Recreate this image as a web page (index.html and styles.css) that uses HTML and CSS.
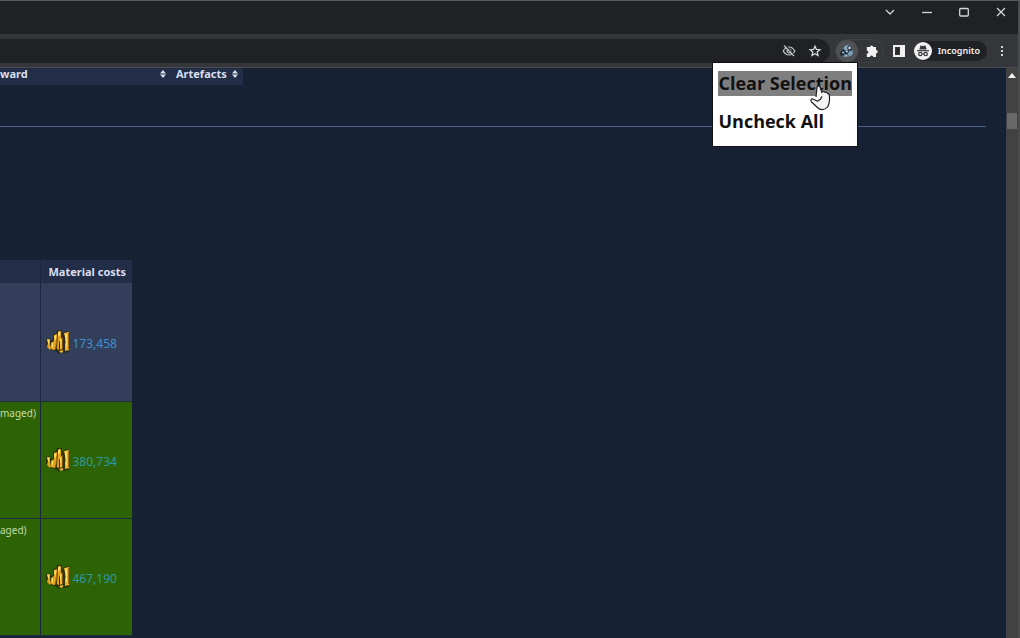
FILE: index.html
```html
<!DOCTYPE html>
<html lang="en">
<head>
    <meta charset="UTF-8">
    <meta name="viewport" content="width=device-width, initial-scale=1.0">
    <title>Material costs</title>
    <link rel="stylesheet" href="styles.css">
</head>
<body>
    <div class="browser">
        <header class="titlebar">
            <button class="window-button" aria-label="Search tabs">
                <svg width="12" height="12" viewBox="0 0 12 12"><path d="M2 4l4 4 4-4"/></svg>
            </button>
            <button class="window-button" aria-label="Minimize">
                <svg width="12" height="12" viewBox="0 0 12 12"><path d="M1 6.5h10"/></svg>
            </button>
            <button class="window-button" aria-label="Maximize">
                <svg width="12" height="12" viewBox="0 0 12 12"><rect x="1.7" y="2.5" width="8.6" height="7.5" rx="1"/></svg>
            </button>
            <button class="window-button" aria-label="Close">
                <svg width="12" height="12" viewBox="0 0 12 12"><path d="M2 2l8 8M10 2l-8 8"/></svg>
            </button>
        </header>

        <div class="toolbar">
            <div class="address">
                <input class="address-input" type="text" aria-label="Address">
                <button class="icon-button" aria-label="Third-party cookies blocked">
                    <svg width="14" height="14" viewBox="0 0 14 14" fill="none" stroke="#c4c6c9" stroke-width="1.2">
                        <path d="M1.2 7C3 3.8 5 3 7 3s4 .8 5.8 4C11 10.2 9 11 7 11S3 10.2 1.2 7z"/>
                        <circle cx="7" cy="7" r="2"/>
                        <path d="M3.5 1.5l9.5 10" stroke="#202124"/>
                        <path d="M2 1.5l10 10.5"/>
                    </svg>
                </button>
                <button class="icon-button" aria-label="Bookmark this tab">
                    <svg width="14" height="14" viewBox="0 0 14 14" fill="none" stroke="#d5d6d8" stroke-width="1.3">
                        <path d="M7 2.2l1.4 3.2 3.5.3-2.7 2.3.8 3.5L7 9.7l-3 1.8.8-3.5-2.7-2.3 3.5-.3z"/>
                    </svg>
                </button>
            </div>
            <div class="extensions">
                <button class="extension-button" aria-label="Selection helper">
                    <svg width="16" height="16" viewBox="0 0 16 16">
                        <path d="M3 9l2-5 4-2 3 2 2 4-1 4-4 2H4z" fill="#5f7f95"/>
                        <path d="M5 4l3-2 2 2-2 3-3-1z" fill="#8eabbd"/>
                        <path d="M9 3l3 1 1 3-3 1-2-3z" fill="#1d2b38"/>
                        <path d="M1 10l3-4 2 2-1 4-3 1z" fill="#1a2631"/>
                        <path d="M6 9l2-2 2 1-1 3-3 1z" fill="#1f3040"/>
                        <path d="M10 9l3-1 1 3-3 2-2-2z" fill="#83a2b5"/>
                        <circle cx="10.5" cy="5" r="1.2" fill="#e2edf2"/>
                        <circle cx="8" cy="8.5" r="1" fill="#c7d7df"/>
                        <circle cx="4" cy="9.5" r="1" fill="#b8c8d0"/>
                        <circle cx="7" cy="12.5" r="1" fill="#b8c8d0"/>
                    </svg>
                </button>
                <button class="icon-button" aria-label="Extensions">
                    <svg width="14" height="14" viewBox="0 0 14 14" fill="#f1f1f1">
                        <path d="M5 3a1.6 1.6 0 0 1 3.2 0H11v3a1.7 1.7 0 0 1 0 3.4V13H8.2a1.6 1.6 0 0 0-3.2 0H1.8V9.7a1.6 1.6 0 0 0 0-3.2V3z"/>
                    </svg>
                </button>
            </div>
            <button class="icon-button" aria-label="Side panel">
                <svg width="14" height="14" viewBox="0 0 14 14">
                    <path d="M1 1h12v12H1zM3 3v8h5V3z" fill="#f1f1f1" fill-rule="evenodd"/>
                    <path d="M4.5 4.5h2v5h-2z" fill="#202124"/>
                </svg>
            </button>
            <button class="profile">
                <svg width="18" height="18" viewBox="0 0 18 18">
                    <circle cx="9" cy="9" r="9" fill="#f1f1f1"/>
                    <path d="M6.5 3.5l2.5.6 2.5-.6 1.2 4H5.3z" fill="#35363a"/>
                    <path d="M3 8.7h12" stroke="#35363a" stroke-width="1.2"/>
                    <g fill="none" stroke="#35363a" stroke-width="1.2">
                        <circle cx="6.3" cy="12" r="1.7"/>
                        <circle cx="11.7" cy="12" r="1.7"/>
                        <path d="M8 12h2"/>
                    </g>
                </svg>
                Incognito
            </button>
            <button class="icon-button" aria-label="Menu">
                <svg width="14" height="14" viewBox="0 0 14 14" fill="#d5d6d8">
                    <rect x="6" y="2" width="2" height="2"/>
                    <rect x="6" y="6" width="2" height="2"/>
                    <rect x="6" y="10" width="2" height="2"/>
                </svg>
            </button>
        </div>

        <div class="viewport">
            <main class="page">
                <table class="rewards">
                    <thead>
                        <tr>
                            <th class="reward">
                                <button class="sort">ward
                                    <svg width="6" height="8" viewBox="0 0 6 8"><path d="M3 0l3 3.5H0zM3 8L0 4.5h6z"/></svg>
                                </button>
                            </th>
                            <th>
                                <button class="sort">Artefacts
                                    <svg width="6" height="8" viewBox="0 0 6 8"><path d="M3 0l3 3.5H0zM3 8L0 4.5h6z"/></svg>
                                </button>
                            </th>
                        </tr>
                    </thead>
                </table>
                <hr class="divider">

                <svg class="defs" width="0" height="0">
                    <symbol id="coins" viewBox="0 0 24 24">
                        <path d="M0 9l4-1 1 3 2-1V4l3-1 1-3h5v5l2-3 5-1v21l-5 1-3-1-2 2-4-3-5-1-4-4z" fill="#2b2410" opacity=".7"/>
                        <path d="M1 9h3v5l1 4-1 2-3-3 1-4-1-2zM5 13l3-2v9l-3-1zM8 5l3-1v8l-2 8-2-1 1-5zM12 2l3-1v8l-2 3v8l-2-1z" fill="#e3a51c"/>
                        <path d="M14 9l2-1v11l-2 1zM18 3l5-1v18l-4 1v-7l1-2zM13 21l4-1v2l-2 1z" fill="#efb428"/>
                        <path d="M12 2l2-1v4l-2 2zM8 6l2-1v4l-1 2zM19 4l2-1v13l-1 2zM14 10l1-1v5l-1 1zM6 13h1v4l-1 1zM2 10h1v3l-1 1z" fill="#ffdc62"/>
                        <path d="M16.5 7v12M22.5 3v16M10.8 8l-1 11" fill="none" stroke="#8e5b0b" stroke-width=".8"/>
                    </symbol>
                </svg>
                <table class="costs">
                    <thead>
                        <tr>
                            <th></th>
                            <th>Material costs</th>
                        </tr>
                    </thead>
                    <tbody>
                        <tr>
                            <td class="material"></td>
                            <td><span class="price"><svg width="24" height="24"><use href="#coins"/></svg><a href="#">173,458</a></span></td>
                        </tr>
                        <tr class="checked">
                            <td class="material">maged)</td>
                            <td><span class="price"><svg width="24" height="24"><use href="#coins"/></svg><a href="#">380,734</a></span></td>
                        </tr>
                        <tr class="checked">
                            <td class="material">aged)</td>
                            <td><span class="price"><svg width="24" height="24"><use href="#coins"/></svg><a href="#">467,190</a></span></td>
                        </tr>
                    </tbody>
                </table>
            </main>
            <div class="scrollbar">
                <svg width="8" height="6" viewBox="0 0 8 6"><path d="M4 0l4 5H0z" fill="#f1f1f1"/></svg>
                <div class="thumb"></div>
            </div>
        </div>

        <div class="popup">
            <button class="popup-item active">Clear Selection</button>
            <button class="popup-item">Uncheck All</button>
        </div>
        <svg class="cursor" width="22" height="28" viewBox="0 0 22 28">
            <path d="M8 3c.5-1.5 2.5-1.5 3 0l2 5c1.5-1 2.5-.5 3 .5 1.5-.6 2.3 0 2.6 1.2 1.2-.2 1.7.6 1.8 1.8.4 4 .3 8-1.9 11.5-2.5 3.300-7.500 3.300-10 .5L2.500 18C1 16 2.500 14 4.500 15.200l3.500 1.300-1-4z" fill="#f4f4f4"/>
            <path d="M13 8c1.500-1 2.500-.5 3 .5 1.500-.6 2.300 0 2.600 1.200 1.200-.2 1.700.6 1.800 1.800.4 4 .3 8-1.900 11.500-2.500 3.300-7.500 3.300-10 .5L2.500 18C1 16 2.500 14 4.500 15.200l4 2 3-2 1.500-3M7 13L8 3c.5-1.500 2.500-1.500 3 0l2 6" fill="none" stroke="#222" stroke-width="1.200" stroke-linejoin="round"/>
        </svg>
    </div>
</body>
</html>
```
FILE: styles.css
```css
* {
    box-sizing: border-box;
}
body {
    margin: 0;
    font-family: "Noto Sans", sans-serif;
    font-size: 11px;
    background-color: #172134;
}
button {
    padding: 0;
    border: 0;
    background: none;
    color: inherit;
    font: inherit;
    cursor: pointer;
}
svg {
    display: block;
    flex: none;
}
.browser {
    position: relative;
    display: flex;
    flex-direction: column;
    height: 100vh;
    overflow: hidden;
    border-top: 1px solid #5a5b5d;
    border-right: 2px solid #4a4b4d;
}
.titlebar {
    display: flex;
    justify-content: flex-end;
    align-items: flex-start;
    height: 33px;
    padding-right: 3px;
    background-color: #202124;
}
.window-button {
    display: flex;
    justify-content: center;
    align-items: center;
    width: 28px;
    height: 22px;
    margin-left: 9px;
}
.window-button svg {
    fill: none;
    stroke: #d5d6d8;
    stroke-width: 1.3;
}
.toolbar {
    display: flex;
    align-items: center;
    gap: 5px;
    height: 34px;
    padding-right: 6px;
    background-color: #35363a;
    border-bottom: 1px solid #4b4c50;
}
.address {
    display: flex;
    flex: 1;
    align-items: center;
    gap: 6px;
    height: 24px;
    padding-right: 5px;
    background-color: #202124;
    border-radius: 0 12px 12px 0;
}
.address-input {
    flex: 1;
    min-width: 0;
    border: 0;
    background: none;
    color: #e8eaed;
    outline: none;
}
.icon-button {
    display: flex;
    justify-content: center;
    align-items: center;
    width: 20px;
    height: 20px;
}
.extensions {
    display: flex;
    align-items: center;
    gap: 4px;
    height: 24px;
    padding-right: 1px;
    border: 1px solid #404145;
    border-radius: 12px;
}
.extension-button {
    display: flex;
    justify-content: center;
    align-items: center;
    width: 22px;
    height: 22px;
    border-radius: 50%;
    background-color: #505155;
}
.profile {
    display: flex;
    align-items: center;
    gap: 6px;
    height: 20px;
    padding-right: 7px;
    border-radius: 10px;
    background-color: #202124;
    color: #f1f1f1;
    font-size: 9px;
    font-weight: 600;
}
.viewport {
    display: flex;
    flex: 1;
    min-height: 0;
}
.page {
    flex: 1;
    min-width: 0;
    color: #d8dfee;
}
table {
    border-collapse: collapse;
}
th {
    padding: 0;
    background-color: #222d48;
    font-weight: 700;
    text-align: left;
}
td {
    padding: 0;
}
.rewards th {
    width: 73px;
    height: 17px;
    padding: 0 5px 2px 6px;
}
.rewards .reward {
    width: 170px;
    padding-right: 4px;
    padding-left: 0;
}
.sort {
    display: flex;
    justify-content: space-between;
    width: 100%;
    height: 15px;
    line-height: 12px;
}
.sort svg {
    margin-top: 2px;
    fill: #d8dfee;
}
.divider {
    height: 1px;
    margin: 41px 20px 133px 0;
    border: 0;
    background-color: #4d628a;
}
.defs {
    position: absolute;
}
.costs th {
    height: 23px;
    padding-left: 8px;
}
.costs th:first-child {
    width: 40px;
    padding: 0;
    border-right: 1px solid #1b2740;
}
.costs th:last-child {
    width: 92px;
}
.costs td {
    height: 118px;
    border-bottom: 1px solid #1d3040;
    background-color: #333f5a;
}
.costs .checked td {
    height: 117px;
    background-color: #2d6205;
}
.costs .material {
    padding-top: 4px;
    border-right: 1px solid #1b2740;
    vertical-align: top;
    color: #c3dcae;
    font-size: 10px;
}
.price {
    display: flex;
    align-items: center;
    gap: 3px;
    padding-left: 5px;
}
.price a {
    padding-top: 4px;
    color: #3f8fd0;
    font-size: 12px;
    text-decoration: none;
}
.checked .price a {
    color: #2f9aa0;
}
.scrollbar {
    display: flex;
    flex-direction: column;
    align-items: center;
    gap: 34px;
    width: 12px;
    padding-top: 5px;
    background-color: #424242;
}
.thumb {
    width: 10px;
    height: 16px;
    background-color: #686868;
}
.popup {
    position: absolute;
    top: 61px;
    right: 160px;
    display: flex;
    flex-direction: column;
    align-items: flex-start;
    gap: 13px;
    padding: 8px 5px 12px;
    border: 1px solid #111;
    background-color: #fff;
    color: #111;
    font-family: "Open Sans", sans-serif;
    font-size: 18px;
    font-weight: 700;
    line-height: 25px;
}
.popup-item.active {
    background-color: #7f7f7f;
}
.cursor {
    position: absolute;
    top: 83px;
    left: 809px;
}
```
